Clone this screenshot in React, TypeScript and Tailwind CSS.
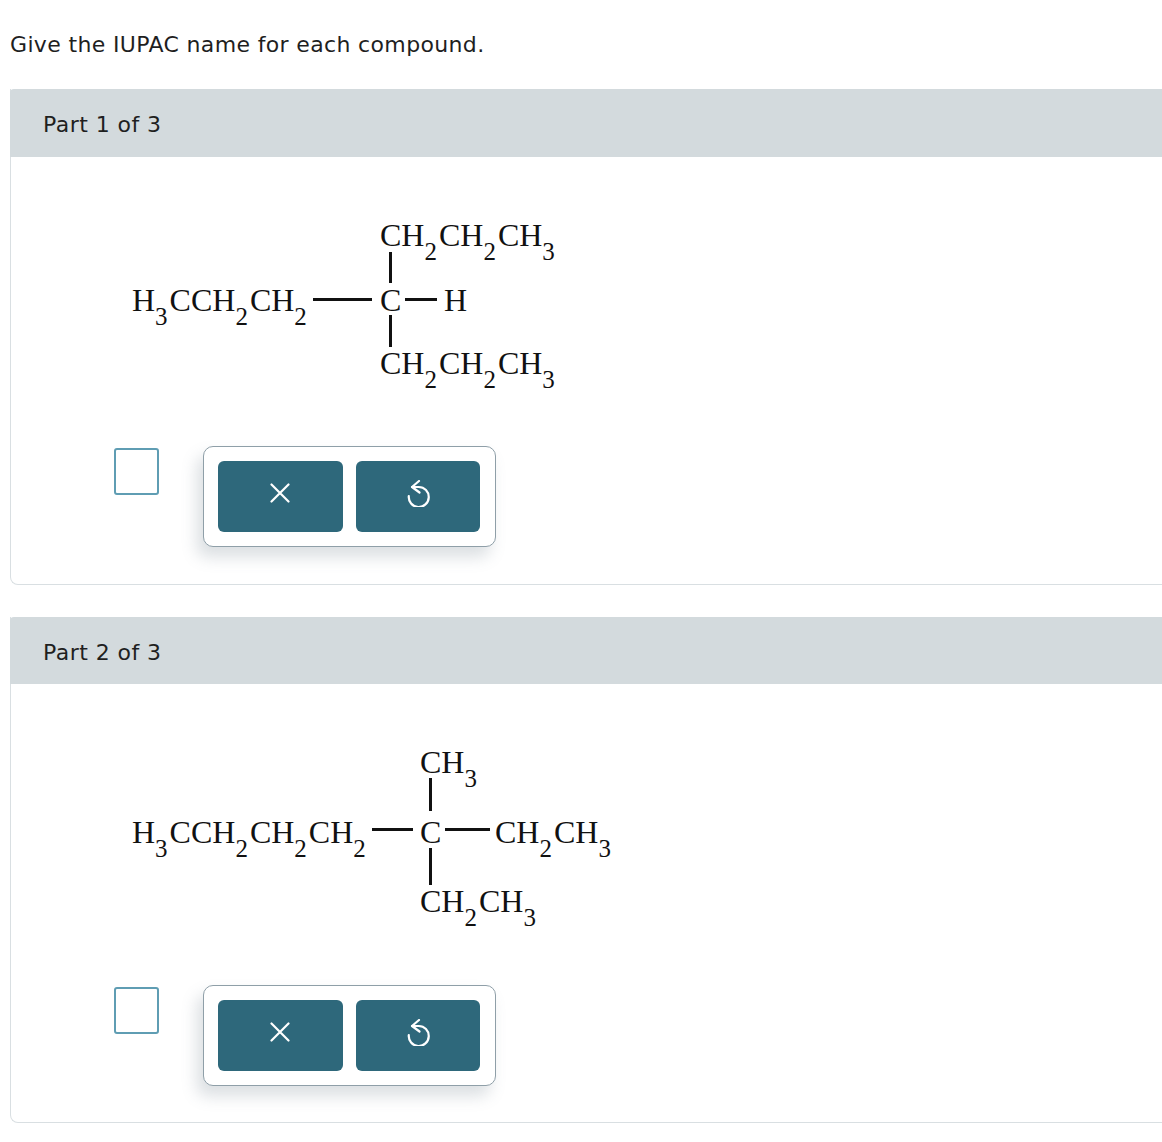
import React from 'react';

const Sub: React.FC<{ children: React.ReactNode }> = ({ children }) => (
  <span className="relative top-[14px] text-[25px] leading-none tracking-[2px]">{children}</span>
);

const Formula: React.FC<{ parts: string[]; className: string }> = ({ parts, className }) => (
  <span className={`absolute whitespace-nowrap text-[32px] leading-[36px] text-[#111111] ${className}`}>
    {parts.map((p, i) => (i % 2 === 0 ? <span key={i}>{p}</span> : <Sub key={i}>{p}</Sub>))}
  </span>
);

const Bond: React.FC<{ className: string }> = ({ className }) => (
  <div className={`absolute bg-[#111111] ${className}`} />
);

const UndoIcon = () => (
  <svg className="mb-[6px] ml-[2px]" width="24" height="27" viewBox="0 0 24 27" fill="none" stroke="white" strokeWidth="2.2" strokeLinecap="round" strokeLinejoin="round">
    <path d="M12 1 L5 7 L12.5 12.5" />
    <path d="M5 7 H11.8 A10 10 0 1 1 1.8 16" />
  </svg>
);

const CloseIcon = () => (
  <svg className="mb-[7px] mr-[1px]" width="20" height="20" viewBox="0 0 20 20" fill="none" stroke="white" strokeWidth="2.2" strokeLinecap="round">
    <path d="M1.5 1.5 L18.5 18.5 M18.5 1.5 L1.5 18.5" />
  </svg>
);

const AnswerRow = () => (
  <div className="flex items-start ml-[103px]">
    <div className="mt-[2px] w-[45px] h-[47px] bg-white border-2 border-[#5f9db3] rounded-[3px]" />
    <div className="ml-[44px] flex gap-[13px] p-[14px] w-[293px] h-[101px] bg-white border border-[#8f9fa8] rounded-[10px] shadow-[-6px_10px_16px_rgba(90,110,125,0.22)]">
      <button className="w-[125px] flex items-center justify-center bg-[#2e687b] rounded-[6px]">
        <CloseIcon />
      </button>
      <button className="w-[124px] flex items-center justify-center bg-[#2e687b] rounded-[6px]">
        <UndoIcon />
      </button>
    </div>
  </div>
);

const Part: React.FC<{ title: string; children: React.ReactNode; className: string }> = ({ title, children, className }) => (
  <section className={`w-[1180px] ml-[10px] border-l border-b border-[#d9dfe2] rounded-bl-[8px] ${className}`}>
    <div className="-ml-px h-[67.2px] flex items-center pt-[3px] pl-[33px] bg-[#d3dadd] rounded-tl-[4px] text-[22px] tracking-[0.45px] text-[#1f1f1f]">
      {title}
    </div>
    {children}
  </section>
);

export default function App() {
  return (
    <div className="w-[1162px] h-[1142px] overflow-hidden bg-white font-['DejaVu_Sans',Verdana,sans-serif]">
      <h1 className="pt-[29px] pl-[10px] h-[89.4px] text-[22px] leading-[32px] tracking-[0.35px] font-normal text-[#1f1f1f]">
        Give the IUPAC name for each compound.
      </h1>

      <Part title="Part 1 of 3" className="h-[496px]">
        <div className="relative mt-[58px] ml-[121px] h-[185px] font-['Liberation_Serif',serif]">
          <Formula parts={['CH', '2', 'CH', '2', 'CH', '3']} className="left-[248px] top-[2px]" />
          <Bond className="left-[256.5px] top-[37px] w-[3px] h-[31px]" />
          <Formula parts={['H', '3', 'CCH', '2', 'CH', '2']} className="left-0 top-[67px]" />
          <Bond className="left-[181px] top-[83px] w-[59px] h-[3px]" />
          <Formula parts={['C']} className="left-[248px] top-[67px]" />
          <Bond className="left-[273px] top-[83px] w-[32px] h-[3px]" />
          <Formula parts={['H']} className="left-[312px] top-[67px]" />
          <Bond className="left-[256.5px] top-[100px] w-[3px] h-[32px]" />
          <Formula parts={['CH', '2', 'CH', '2', 'CH', '3']} className="left-[248px] top-[130px]" />
        </div>
        <div className="mt-[46px]">
          <AnswerRow />
        </div>
      </Part>

      <Part title="Part 2 of 3" className="h-[506px] mt-[31.6px]">
        <div className="relative mt-[60px] ml-[121px] h-[185px] font-['Liberation_Serif',serif]">
          <Formula parts={['CH', '3']} className="left-[288px] top-0" />
          <Bond className="left-[296.5px] top-[34px] w-[3px] h-[33px]" />
          <Formula parts={['H', '3', 'CCH', '2', 'CH', '2', 'CH', '2']} className="left-0 top-[70px]" />
          <Bond className="left-[240px] top-[84px] w-[41px] h-[3px]" />
          <Formula parts={['C']} className="left-[288px] top-[70px]" />
          <Bond className="left-[313px] top-[84px] w-[45px] h-[3px]" />
          <Formula parts={['CH', '2', 'CH', '3']} className="left-[363px] top-[70px]" />
          <Bond className="left-[296.5px] top-[104px] w-[3px] h-[37px]" />
          <Formula parts={['CH', '2', 'CH', '3']} className="left-[288px] top-[139px]" />
        </div>
        <div className="mt-[56px]">
          <AnswerRow />
        </div>
      </Part>
    </div>
  );
}
